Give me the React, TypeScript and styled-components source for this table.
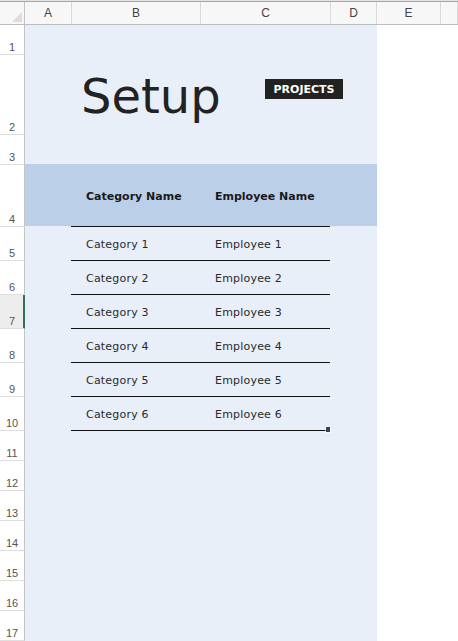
import React from "react";
import styled, { createGlobalStyle, css } from "styled-components";

const GlobalStyle = createGlobalStyle`
  html, body { margin: 0; padding: 0; background: #fff; overflow: hidden; }
  #root { width: 458px; height: 641px; overflow: hidden; }
`;

const Sheet = styled.div`
  width: 458px;
  height: 641px;
  display: flex;
  flex-direction: column;
  background: #fff;
  overflow: hidden;
`;

const TopEdge = styled.div`
  height: 1px;
  flex: none;
  background: #e2e2e2;
`;

const ColumnHeaderRow = styled.div`
  display: flex;
  flex: none;
  height: 24px;
  box-sizing: border-box;
  border-top: 1px solid #a8a8a8;
  border-bottom: 1px solid #bdbdbd;
  background: #f7f7f7;
`;

const Corner = styled.div`
  width: 25px;
  flex: none;
  box-sizing: border-box;
  border-right: 1px solid #c4c4c4;
  position: relative;
  &::after {
    content: "";
    position: absolute;
    right: 2px;
    bottom: 2px;
    width: 10px;
    height: 10px;
    background: #dcdcdc;
    clip-path: polygon(100% 0, 100% 100%, 0 100%);
  }
`;

const ColHead = styled.div<{ $w?: number }>`
  ${(p) =>
    p.$w
      ? css`
          width: ${p.$w}px;
          flex: none;
        `
      : css`
          flex: 1;
        `}
  box-sizing: border-box;
  border-right: 1px solid #dadada;
  display: flex;
  align-items: center;
  justify-content: center;
  font: 12px "Liberation Sans", Arial, sans-serif;
  color: #444;
`;

const Body = styled.div`
  flex: 1;
  display: flex;
  min-height: 0;
`;

const RowHeaders = styled.div`
  width: 25px;
  flex: none;
  display: flex;
  flex-direction: column;
`;

const RowHead = styled.div<{ $h: number; $selected?: boolean }>`
  height: ${(p) => p.$h}px;
  flex: none;
  box-sizing: border-box;
  border-bottom: 1px solid #dedede;
  border-right: 1px solid #c4c4c4;
  display: flex;
  align-items: flex-end;
  justify-content: center;
  padding-bottom: 1px;
  font: 11px "Liberation Sans", Arial, sans-serif;
  color: #555;
  background: #fff;
  ${(p) =>
    p.$selected &&
    css`
      background: #ededed;
      border-right-color: #2f7352;
      box-shadow: inset -1px 0 0 #2f7352;
    `}
`;

const Canvas = styled.div`
  flex: 1;
  display: flex;
`;

const Panel = styled.div`
  width: 352px;
  flex: none;
  background: #e9eff8;
  display: flex;
  flex-direction: column;
`;

const TitleArea = styled.div`
  height: 139px;
  flex: none;
  box-sizing: border-box;
  padding-left: 56px;
  display: grid;
  grid-template-columns: 184px 78px;
  align-items: start;
`;

const Title = styled.h1`
  margin: 47px 0 0;
  font: 400 48px/48px "DejaVu Sans", Verdana, sans-serif;
  color: #222;
`;

const Badge = styled.div`
  margin-top: 54px;
  width: 78px;
  height: 20px;
  background: #222;
  color: #fff;
  display: flex;
  align-items: center;
  justify-content: center;
  font: 700 11px "DejaVu Sans", Verdana, sans-serif;
`;

const HeaderBand = styled.div`
  height: 62px;
  flex: none;
  background: #bccfe8;
  display: flex;
  align-items: center;
  padding-top: 3px;
  box-sizing: border-box;
`;

const Columns = styled.div`
  margin-left: 46px;
  width: 259px;
  display: grid;
  grid-template-columns: 129px 130px;
`;

const HeadCell = styled.div`
  padding-left: 15px;
  font: 700 11px "DejaVu Sans", Verdana, sans-serif;
  color: #1a1a1a;
`;

const Table = styled.div`
  margin-left: 46px;
  width: 259px;
  border-top: 1px solid #111;
`;

const TRow = styled.div`
  position: relative;
  height: 34px;
  box-sizing: border-box;
  border-bottom: 1px solid #111;
  display: grid;
  grid-template-columns: 129px 130px;
  align-items: center;
  padding-top: 2px;
`;

const Cell = styled.div`
  padding-left: 15px;
  font: 400 11px "DejaVu Sans", Verdana, sans-serif;
  letter-spacing: 0.2px;
  color: #2a2a2a;
`;

const FillHandle = styled.div`
  position: absolute;
  right: 0;
  bottom: -2px;
  width: 4px;
  height: 5px;
  background: #3c4252;
  box-shadow: 0 0 0 1px rgba(255, 255, 255, 0.55);
`;

const columns: { label: string; w?: number }[] = [
  { label: "A", w: 47 },
  { label: "B", w: 129 },
  { label: "C", w: 130 },
  { label: "D", w: 46 },
  { label: "E", w: 64 },
  { label: "" },
];

const rowHeights = [30, 80, 30, 62, 34, 34, 34, 34, 34, 34, 30, 30, 30, 30, 30, 30, 30];

const data = [1, 2, 3, 4, 5, 6].map((n) => ({
  category: `Category ${n}`,
  employee: `Employee ${n}`,
}));

export default function App() {
  return (
    <>
      <GlobalStyle />
      <Sheet>
        <TopEdge />
        <ColumnHeaderRow>
          <Corner />
          {columns.map((c, i) => (
            <ColHead key={i} $w={c.w}>
              {c.label}
            </ColHead>
          ))}
        </ColumnHeaderRow>
        <Body>
          <RowHeaders>
            {rowHeights.map((h, i) => (
              <RowHead key={i} $h={h} $selected={i === 6}>
                {i + 1}
              </RowHead>
            ))}
          </RowHeaders>
          <Canvas>
            <Panel>
              <TitleArea>
                <Title>Setup</Title>
                <Badge>PROJECTS</Badge>
              </TitleArea>
              <HeaderBand>
                <Columns>
                  <HeadCell>Category Name</HeadCell>
                  <HeadCell>Employee Name</HeadCell>
                </Columns>
              </HeaderBand>
              <Table>
                {data.map((r, i) => (
                  <TRow key={i}>
                    <Cell>{r.category}</Cell>
                    <Cell>{r.employee}</Cell>
                    {i === data.length - 1 && <FillHandle />}
                  </TRow>
                ))}
              </Table>
            </Panel>
          </Canvas>
        </Body>
      </Sheet>
    </>
  );
}
